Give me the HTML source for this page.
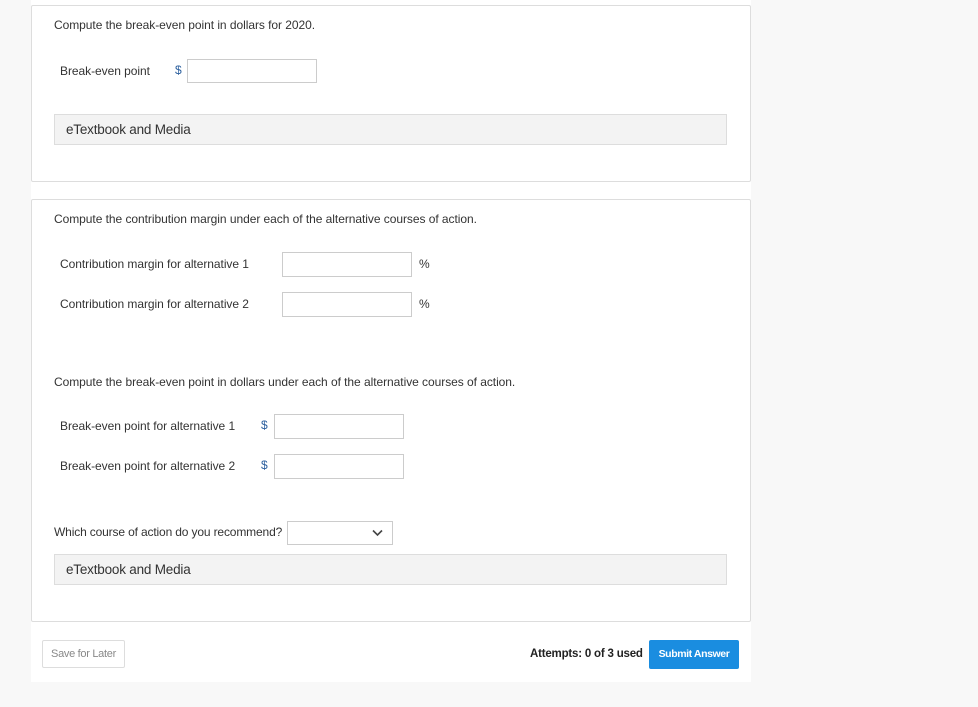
<!DOCTYPE html>
<html><head><style>
body{margin:0;width:978px;height:707px;background:#f8f8f8;font-family:"Liberation Sans",sans-serif;color:#333;position:relative;overflow:hidden}
.a{position:absolute}
.box{position:absolute;left:31px;width:718px;background:#fff;border:1px solid #ddd;border-radius:2px}
.t{position:absolute;font-size:12px;white-space:nowrap;letter-spacing:-0.05px}
.in{position:absolute;height:22px;border:1px solid #ccc;background:#fff;box-sizing:border-box}
.et{position:absolute;left:54px;width:673px;height:31px;background:#f3f3f3;border:1px solid #ddd;box-sizing:border-box;font-size:13.5px;line-height:29px;padding-left:11px;letter-spacing:-0.2px}
.d{color:#2b5f9e}
</style></head><body>
<div class="a" style="left:31px;top:0;width:720px;height:682px;background:#fff"></div>
<div class="box" style="top:5px;height:175px"></div>
<div class="box" style="top:199px;height:421px"></div>
<div class="t" style="left:54px;top:18px">Compute the break-even point in dollars for 2020.</div>
<div class="t" style="left:60px;top:64px">Break-even point</div>
<div class="t d" style="left:175px;top:63px">$</div>
<div class="in" style="left:187px;top:59px;width:130px;height:24px"></div>
<div class="et" style="top:114px">eTextbook and Media</div>

<div class="t" style="left:54px;top:212px">Compute the contribution margin under each of the alternative courses of action.</div>
<div class="t" style="left:60px;top:257px">Contribution margin for alternative 1</div>
<div class="in" style="left:282px;top:252px;width:130px;height:25px"></div>
<div class="t" style="left:419px;top:257px">%</div>
<div class="t" style="left:60px;top:297px">Contribution margin for alternative 2</div>
<div class="in" style="left:282px;top:292px;width:130px;height:25px"></div>
<div class="t" style="left:419px;top:297px">%</div>

<div class="t" style="left:54px;top:375px">Compute the break-even point in dollars under each of the alternative courses of action.</div>
<div class="t" style="left:60px;top:419px">Break-even point for alternative 1</div>
<div class="t d" style="left:261px;top:418px">$</div>
<div class="in" style="left:274px;top:414px;width:130px;height:25px"></div>
<div class="t" style="left:60px;top:459px">Break-even point for alternative 2</div>
<div class="t d" style="left:261px;top:458px">$</div>
<div class="in" style="left:274px;top:454px;width:130px;height:25px"></div>

<div class="t" style="left:54px;top:525px;letter-spacing:-0.15px">Which course of action do you recommend?</div>
<div class="in" style="left:287px;top:521px;width:106px;height:24px"></div>
<svg class="a" style="left:372px;top:529px" width="11" height="8"><path d="M1 1.5L5.5 6L10 1.5" fill="none" stroke="#444" stroke-width="1.6"/></svg>
<div class="et" style="top:554px">eTextbook and Media</div>

<div class="a" style="left:42px;top:640px;width:83px;height:28px;border:1px solid #ddd;border-radius:2px;box-sizing:border-box;font-size:11px;color:#888;line-height:26px;text-align:center;letter-spacing:-0.3px">Save for Later</div>
<div class="t" style="left:530px;top:648px;font-size:11.5px;font-weight:bold;color:#222;letter-spacing:-0.2px">Attempts: 0 of 3 used</div>
<div class="a" style="left:649px;top:640px;width:90px;height:29px;background:#1a8de0;border-radius:2px;color:#fff;font-size:10.5px;line-height:29px;text-align:center;font-weight:bold;letter-spacing:-0.4px">Submit Answer</div>
</body></html>
